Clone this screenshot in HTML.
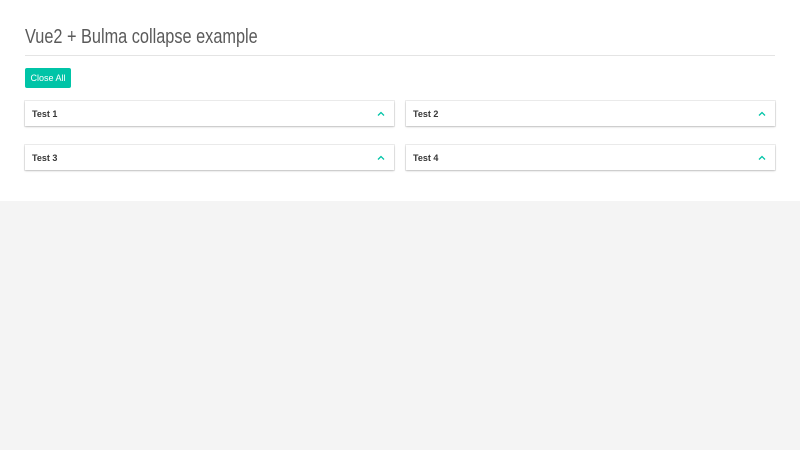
<!DOCTYPE html>
<html><head><style>
html,body{margin:0;padding:0;}
body{width:800px;height:450px;background:#f4f4f4;font-family:"Liberation Sans",sans-serif;position:relative;overflow:hidden}
.top{position:absolute;left:0;top:0;width:800px;height:201px;background:#fff}
h1{position:absolute;left:25px;top:25px;margin:0;font-weight:300;font-size:20px;color:#5a5a5a;line-height:24px;white-space:nowrap;transform-origin:0 0;transform:scaleX(0.815)}
.hr{position:absolute;left:25px;top:55px;width:750px;height:1px;background:#e4e4e4}
.btn{position:absolute;left:25px;top:68px;width:46px;height:20px;background:#00c4a7;border-radius:2px;color:#fff;font-size:9px;line-height:20px;text-align:center}
.card{position:absolute;width:369px;height:25px;background:#fff;box-shadow:0 1px 2px rgba(10,10,10,.2),0 0 0 1px rgba(10,10,10,.07);}
.card b{position:absolute;left:7px;top:0;line-height:26px;font-size:9px;color:#363636}
.card svg{position:absolute;right:9px;top:10px}
</style></head><body>
<div class="top">
<h1>Vue2 + Bulma collapse example</h1>
<div class="hr"></div>
<div class="btn">Close All</div>
<div class="card" style="left:25px;top:101px"><b>Test 1</b><svg width="8" height="6" viewBox="0 0 8 6"><path d="M1 4.5L4 1.5L7 4.5" fill="none" stroke="#00c4a7" stroke-width="1.3"/></svg></div>
<div class="card" style="left:406px;top:101px"><b>Test 2</b><svg width="8" height="6" viewBox="0 0 8 6"><path d="M1 4.5L4 1.5L7 4.5" fill="none" stroke="#00c4a7" stroke-width="1.3"/></svg></div>
<div class="card" style="left:25px;top:145px"><b>Test 3</b><svg width="8" height="6" viewBox="0 0 8 6"><path d="M1 4.5L4 1.5L7 4.5" fill="none" stroke="#00c4a7" stroke-width="1.3"/></svg></div>
<div class="card" style="left:406px;top:145px"><b>Test 4</b><svg width="8" height="6" viewBox="0 0 8 6"><path d="M1 4.5L4 1.5L7 4.5" fill="none" stroke="#00c4a7" stroke-width="1.3"/></svg></div>
</div>
</body></html>
